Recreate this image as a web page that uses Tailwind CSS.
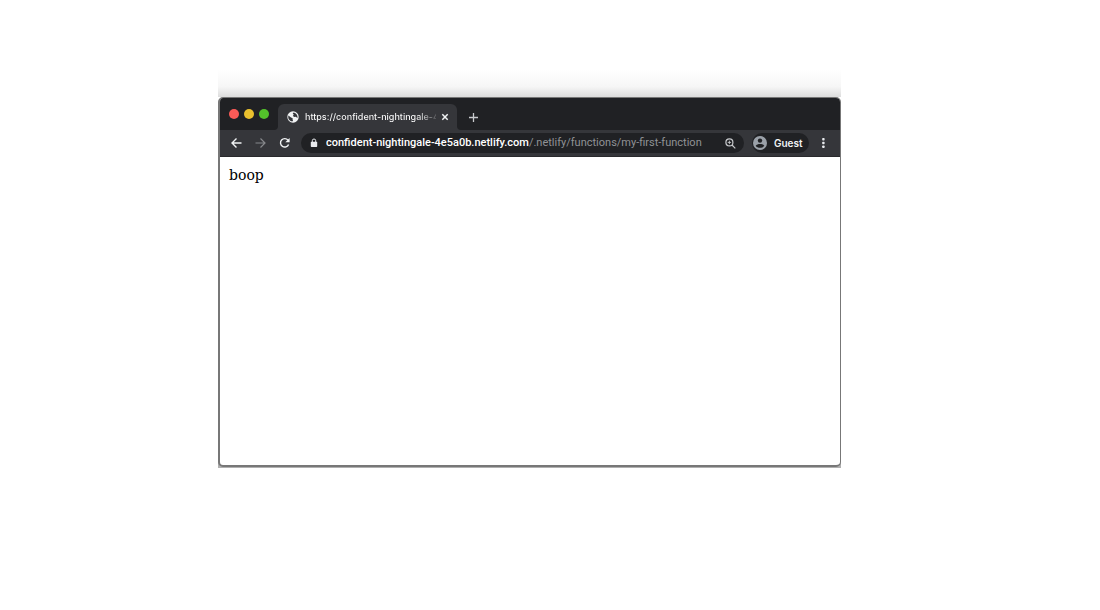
<!DOCTYPE html>
<html lang="en">
<head>
<meta charset="utf-8">
<meta name="viewport" content="width=device-width, initial-scale=1">
<title>my-first-function</title>
<script src="https://cdn.jsdelivr.net/npm/@tailwindcss/browser@4"></script>
</head>
<body class="min-h-screen bg-white font-['Inter',sans-serif]">
<main class="pt-[70px] pr-[259px] pl-[218px]">
  <div class="h-7 bg-linear-to-b from-white via-[#f6f6f6] via-60% to-[#dadada]"></div>
  <div class="-mt-px bg-linear-to-b from-white from-50% to-[#b0b0b0] to-50% pb-px">
  <section class="overflow-hidden rounded-[5px] border border-b-2 border-l-2 border-[#777] bg-white" aria-label="Browser window">
    <header>
      <div class="flex h-8 items-start bg-[#202124] pt-[6px]">
        <div class="flex h-5 items-center gap-[5px] pl-[9px]">
          <button aria-label="Close window" class="size-[10px] rounded-full bg-[#fc5b57]"></button>
          <button aria-label="Minimize window" class="size-[10px] rounded-full bg-[#e9c02e]"></button>
          <button aria-label="Zoom window" class="size-[10px] rounded-full bg-[#53c22b]"></button>
        </div>
        <div class="relative ml-[9px] flex h-[26px] w-[179px] items-center rounded-t-md bg-[#35363a] pl-[9px] text-white">
          <svg class="absolute bottom-0 -left-1 size-1" viewBox="0 0 4 4" fill="#35363a" aria-hidden="true"><path d="M4 0V4H0Q4 4 4 0Z"/></svg>
          <svg class="absolute -right-1 bottom-0 size-1" viewBox="0 0 4 4" fill="#35363a" aria-hidden="true"><path d="M0 0V4H4Q0 4 0 0Z"/></svg>
          <svg class="size-3 shrink-0" viewBox="0 0 12 12" aria-hidden="true">
            <circle cx="6" cy="6" r="5.7" fill="#f1f3f4"/>
            <path d="M1.4 4.6 4 6.4 5.8 7.2 5.3 8.2 6.2 9.1 5.3 10.6C2.9 10.2 1.2 8.3 1.2 6ZM6.5 1.4 5.7 2.8 6.8 3.6 5.8 4.9 7.4 5.9 8.7 5.8 10.5 7.1C11 4.5 9.2 1.7 6.5 1.4Z" fill="#35363a"/>
          </svg>
          <span class="ml-[6px] w-[131px] bg-linear-to-r from-white from-85% to-white/20 bg-clip-text text-[9px] leading-3 font-medium whitespace-nowrap text-transparent">https://confident-nightingale-4</span>
          <button aria-label="Close tab" class="ml-[5px]">
            <svg class="size-2" viewBox="0 0 8 8" fill="none" stroke="#f1f3f4" stroke-width="1.5"><path d="M1.3 1.3 6.7 6.7M6.7 1.3 1.3 6.7"/></svg>
          </button>
        </div>
        <button aria-label="New tab" class="ml-3 flex h-[26px] items-center">
          <svg class="size-[9px]" viewBox="0 0 9 9" fill="none" stroke="#c8cacd" stroke-width="1.3"><path d="M4.5 0V9M0 4.5H9"/></svg>
        </button>
      </div>
      <div class="flex h-[27px] items-center border-b border-[#29292c] bg-[#35363a] pl-[11px]">
        <button aria-label="Back" class="mr-3">
          <svg class="size-3" viewBox="0 0 12 12" fill="none" stroke="#f1f3f4" stroke-width="1.4"><path d="M10.5 6H1M5.5 1.5 1 6 5.5 10.5"/></svg>
        </button>
        <button aria-label="Forward" class="mr-3">
          <svg class="size-3" viewBox="0 0 12 12" fill="none" stroke="#86888b" stroke-width="1.2"><path d="M.5 6H10M5.5 1.5 10 6 5.5 10.5"/></svg>
        </button>
        <button aria-label="Reload" class="mr-[10px]">
          <svg class="size-3" viewBox="0 0 12 12" fill="none" stroke="#f1f3f4" stroke-width="1.4"><path d="M9 3.2A4.2 4.2 0 1 0 9.6 7.4"/><path d="M10.6.9V5.2H6.3Z" fill="#f1f3f4" stroke="none"/></svg>
        </button>
        <form class="flex h-5 min-w-0 flex-1 items-center rounded-full bg-[#202124] pr-2 pl-[9px] font-['Roboto',sans-serif] text-[11px]">
          <svg class="h-[10px] w-2 shrink-0" viewBox="0 0 8 10" aria-hidden="true"><rect x=".8" y="3.8" width="6.4" height="5.2" rx=".7" fill="#e8eaed"/><path d="M2.3 4V2.7a1.7 1.7 0 0 1 3.4 0V4" fill="none" stroke="#e8eaed"/></svg>
          <input id="url" type="text" aria-label="Address" value="confident-nightingale-4e5a0b.netlify.com" class="ml-2 h-4 field-sizing-content font-medium text-white outline-none">
          <label for="url" class="min-w-0 flex-1 whitespace-nowrap text-[#909295]">/.netlify/functions/my-first-function</label>
          <button type="button" aria-label="Page zoom">
            <svg class="size-[11px]" viewBox="0 0 11 11" fill="none" stroke="#c6c8cb" stroke-width="1.2"><circle cx="4.4" cy="4.4" r="3.5"/><path d="M7 7 10.3 10.3"/><path d="M4.4 2.7V6.1M2.7 4.4H6.1" stroke-width=".9"/></svg>
          </button>
        </form>
        <button class="ml-2 flex h-5 w-[57px] shrink-0 items-center gap-[7px] rounded-full bg-[#202124] pl-px text-[10px] font-semibold text-[#f1f3f4]">
          <svg class="size-[14px] shrink-0" viewBox="0 0 14 14" aria-hidden="true"><circle cx="7" cy="7" r="7" fill="#9aa0a8"/><circle cx="7" cy="4.6" r="2.2" fill="#202124"/><path d="M2.7 9.7C4.2 7.4 9.8 7.4 11.3 9.7 9.7 12.5 4.3 12.5 2.7 9.7Z" fill="#202124"/></svg>
          Guest
        </button>
        <button aria-label="Menu" class="mr-[14px] ml-3">
          <svg class="h-3 w-[5px]" viewBox="0 0 5 12" fill="#e8eaed"><rect x="1.2" y="1" width="2.4" height="2.4" rx=".7"/><rect x="1.2" y="4.8" width="2.4" height="2.4" rx=".7"/><rect x="1.2" y="8.6" width="2.4" height="2.4" rx=".7"/></svg>
        </button>
      </div>
    </header>
    <pre class="min-h-[308px] px-[9px] pt-2 font-['DejaVu_Serif',serif] text-[14px] leading-5 text-black">boop</pre>
  </section>
  </div>
</main>
</body>
</html>
